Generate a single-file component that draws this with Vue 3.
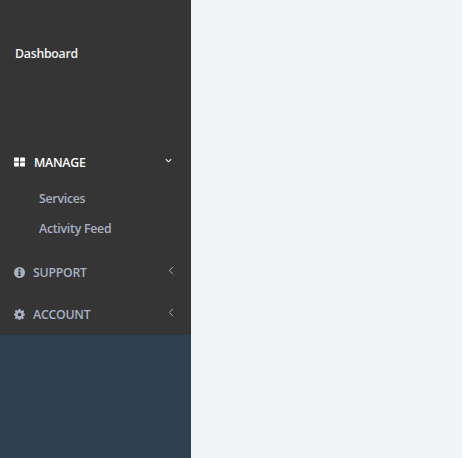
<script setup>
const subItems = ["Services", "Activity Feed"];
</script>

<template>
  <div class="page">
    <aside class="sidebar">
      <div class="menu">
        <a class="brand">Dashboard</a>

        <div class="group active">
          <div class="group-head">
            <svg class="icon" viewBox="0 0 12 10">
              <path d="M0 0.8Q0 0 0.8 0H5.3V4.4H0ZM6.7 0H11.2Q12 0 12 0.8V4.4H6.7ZM0 5.6H5.3V10H0.8Q0 10 0 9.2ZM6.7 5.6H12V9.2Q12 10 11.2 10H6.7Z" fill="#fff" />
            </svg>
            <span class="label">MANAGE</span>
            <svg class="chevron down" viewBox="0 0 10 10">
              <path d="M2 3.4L5 6.4L8 3.4" fill="none" stroke="#fff" stroke-width="1.2" />
            </svg>
          </div>
          <ul class="sub">
            <li v-for="item in subItems" :key="item">{{ item }}</li>
          </ul>
        </div>

        <div class="group support">
          <div class="group-head">
            <svg class="icon small" viewBox="0 0 10 10">
              <path fill-rule="evenodd" d="M5 0a5 5 0 1 1 0 10A5 5 0 0 1 5 0ZM4.1 1.7V3.3H5.9V1.7ZM3.6 4.1V5H4.2V7.3H3.6V8.2H6.4V7.3H5.8V4.1Z" fill="#a7b1c2" />
            </svg>
            <span class="label">SUPPORT</span>
            <svg class="chevron" viewBox="0 0 10 10">
              <path d="M6.5 1L2.7 5L6.5 9" fill="none" stroke="#a7b1c2" stroke-width="1.1" />
            </svg>
          </div>
        </div>

        <div class="group account">
          <div class="group-head">
            <svg class="icon small" viewBox="0 0 24 24">
              <path fill-rule="evenodd" d="M10 0H14L14.7 3.3L16.9 4.2L19.8 2.4L22.6 5.2L20.8 8.1L21.7 10.3L24 11V13.8L20.9 14.6L20 16.8L21.7 19.7L19 22.4L16.1 20.7L14 21.6L13.8 24H10.2L9.4 21.4L7.2 20.5L4.3 22.2L1.8 19.6L3.5 16.7L2.6 14.5L0 13.8V10.2L2.7 9.5L3.6 7.3L1.8 4.4L4.4 1.8L7.3 3.6L9.5 2.7ZM12 8A4 4 0 1 0 12 16A4 4 0 1 0 12 8Z" fill="#a7b1c2" />
            </svg>
            <span class="label">ACCOUNT</span>
            <svg class="chevron" viewBox="0 0 10 10">
              <path d="M6.5 1L2.7 5L6.5 9" fill="none" stroke="#a7b1c2" stroke-width="1.1" />
            </svg>
          </div>
        </div>
      </div>
    </aside>
    <main class="content"></main>
  </div>
</template>

<style scoped>
.page {
  display: flex;
  height: 458px;
  width: 474px;
  background: #fff;
  font-family: "Open Sans", sans-serif;
  font-size: 12.3px;
  letter-spacing: -0.25px;
  font-weight: 600;
  overflow: hidden;
}
.sidebar {
  width: 191px;
  background: #2f4050;
}
.menu {
  height: 335px;
  background: #353535;
  display: flex;
  flex-direction: column;
}
.brand {
  color: #f3f4f6;
  line-height: 18px;
  padding: 45px 15px 0;
}
.group {
  color: #a7b1c2;
}
.group-head {
  display: flex;
  align-items: center;
  height: 18px;
  padding-left: 14px;
}
.active {
  margin-top: 90px;
}
.active .group-head {
  color: #fff;
}
.active .label {
  margin-left: 9px;
}
.support {
  margin-top: 25px;
}
.account {
  margin-top: 24px;
}
.icon {
  width: 11px;
  height: 10px;
  flex: none;
}
.icon.small {
  width: 11px;
  height: 11px;
  margin-top: 1px;
}
.label {
  margin-left: 8px;
}
.chevron {
  width: 9px;
  height: 9px;
  margin-left: auto;
  margin-right: 15px;
  margin-top: -4px;
}
.chevron.down {
  margin-right: 18px;
  margin-top: -4px;
}
.sub {
  list-style: none;
  margin: 0;
  padding: 19px 0 0 39px;
}
.sub li {
  line-height: 18px;
  margin-bottom: 12px;
}
.sub li:last-child {
  margin-bottom: 0;
}
.content {
  width: 271px;
  background: #f3f4f6;
}
</style>
